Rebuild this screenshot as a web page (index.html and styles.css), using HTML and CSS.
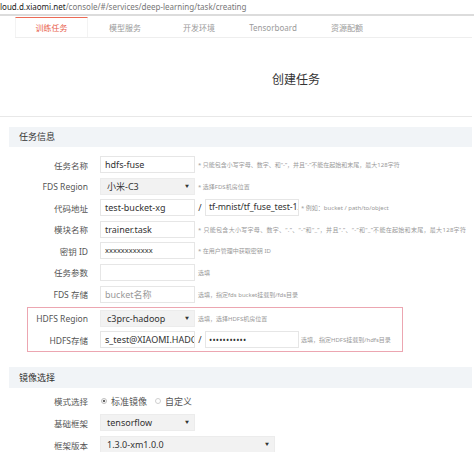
FILE: index.html
```html
<!DOCTYPE html>
<html lang="zh-CN">
<head>
<meta charset="utf-8">
<title>创建任务</title>
<link rel="stylesheet" href="styles.css">
</head>
<body>
<div class="urlbar"><span class="host">loud.d.xiaomi.net</span><span class="path">/console/#/services/deep-learning/task/creating</span></div>
<nav class="tabs">
  <div class="tab active">训练任务</div>
  <div class="tab">模型服务</div>
  <div class="tab">开发环境</div>
  <div class="tab">Tensorboard</div>
  <div class="tab">资源配额</div>
</nav>
<header class="title-area"><h1>创建任务</h1></header>
<main class="content">
  <section class="section">
    <div class="sec-head">任务信息</div>
    <div class="form">
      <div class="row"><div class="label">任务名称</div><div class="ctl">hdfs-fuse</div><span class="hint">* 只能包含小写字母、数字、和“-”，并且“-”不能在起始和末尾，最大128字符</span></div>
      <div class="row"><div class="label">FDS Region</div><div class="ctl select"><span>小米-C3</span><span class="arrow">▼</span></div><span class="hint">* 选择FDS机房位置</span></div>
      <div class="row"><div class="label">代码地址</div><div class="ctl">test-bucket-xg</div><span class="slash">/</span><div class="ctl second big">tf-mnist/tf_fuse_test-1.0.tar.gz</div><span class="hint">* 例如：bucket / path/to/object</span></div>
      <div class="row"><div class="label">模块名称</div><div class="ctl">trainer.task</div><span class="hint wider">* 只能包含大小写字母、数字、“.”、“-”和“_”，并且“.”、“-”和“_”不能在起始和末尾，最大128字符</span></div>
      <div class="row"><div class="label">密钥 ID</div><div class="ctl small">xxxxxxxxxxxx</div><span class="hint">* 在用户管理中获取密钥 ID</span></div>
      <div class="row"><div class="label">任务参数</div><div class="ctl"></div><span class="hint">选填</span></div>
      <div class="row"><div class="label">FDS 存储</div><div class="ctl placeholder">bucket名称</div><span class="hint">选填，指定fds bucket挂载到/fds目录</span></div>
      <div class="hl">
        <div class="row"><div class="label">HDFS Region</div><div class="ctl select"><span>c3prc-hadoop</span><span class="arrow">▼</span></div><span class="hint">选填，选择HDFS机房位置</span></div>
        <div class="row"><div class="label">HDFS存储</div><div class="ctl">s_test@XIAOMI.HADOOP</div><span class="slash">/</span><div class="ctl second pw">•••••••••••</div><span class="hint">选填，指定HDFS挂载到/hdfs目录</span></div>
      </div>
    </div>
  </section>
  <section class="section second-sec">
    <div class="sec-head tall">镜像选择</div>
    <div class="form form2">
      <div class="row"><div class="label">模式选择</div>
        <div class="radios">
          <span class="radio"><span class="dot on"></span>标准镜像</span>
          <span class="radio"><span class="dot"></span>自定义</span>
        </div>
      </div>
      <div class="row"><div class="label">基础框架</div><div class="ctl select"><span>tensorflow</span><span class="arrow">▼</span></div></div>
      <div class="row"><div class="label">框架版本</div><div class="ctl select wide"><span>1.3.0-xm1.0.0</span><span class="arrow">▼</span></div></div>
    </div>
  </section>
</main>
</body>
</html>
```
FILE: styles.css
```css
html, body {
  margin: 0;
  padding: 0;
  background: #fff;
}
body {
  width: 474px;
  height: 452px;
  overflow: hidden;
  font-family: "Noto Sans", "Noto Sans CJK SC", sans-serif;
  color: #333;
}
.urlbar {
  height: 14px;
  line-height: 13px;
  font-size: 8px;
  white-space: nowrap;
  overflow: hidden;
  border-bottom: 2px solid #dcdcdc;
}
.host { color: #222; }
.path { color: #777; }

.tabs {
  display: flex;
  height: 20px;
  margin: 1px 2px 0 15px;
  border-bottom: 1px solid #eeeeee;
}
.tab {
  width: 74px;
  box-sizing: border-box;
  text-align: center;
  font-size: 8px;
  line-height: 19px;
  color: #9a9a9a;
  border-top: 1px solid transparent;
}
.tab.active {
  width: 73px;
  color: #e8604c;
  border-top-color: #ec6a55;
  border-left: 1px solid #f3f3f3;
  border-right: 1px solid #f3f3f3;
}

.title-area {
  height: 78px;
  margin-right: 2px;
  border-bottom: 1px solid #e8e8e8;
}
.title-area h1 {
  margin: 0;
  padding: 34px 0 0 272px;
  font-size: 12px;
  line-height: 16px;
  font-weight: normal;
  color: #333;
}

.content {
  margin: 10px 2px 0 9px;
}
.sec-head {
  height: 20px;
  line-height: 20px;
  padding-left: 10px;
  background: #f1f4f7;
  font-size: 9px;
  color: #333;
}
.sec-head.tall {
  height: 21px;
  line-height: 21px;
}
.second-sec {
  margin-top: 14.5px;
}
.form {
  padding-top: 9px;
}
.form2 {
  padding-top: 5px;
}
.row {
  display: flex;
  align-items: center;
  height: 17px;
  margin-bottom: 4.6px;
}
.label {
  flex: none;
  width: 79px;
  margin-right: 12px;
  text-align: right;
  font-size: 8.5px;
  color: #555;
  white-space: nowrap;
}
.ctl {
  flex: none;
  width: 95px;
  height: 17px;
  box-sizing: border-box;
  border: 1px solid #e6e6e6;
  padding: 0 4px;
  font-size: 9px;
  line-height: 15px;
  color: #333;
  white-space: nowrap;
  overflow: hidden;
  background: #fff;
}
.ctl.select {
  display: flex;
  justify-content: space-between;
  align-items: center;
  background: #f2f2f2;
  border-color: #ececec;
  padding-left: 6px;
}
.ctl.wide { width: 175px; }
.arrow {
  font-size: 4px;
  color: #333;
  margin-right: 1px;
}
.ctl.second {
  width: 94px;
}
.ctl.big {
  font-size: 8.8px;
  letter-spacing: -0.1px;
  padding-left: 3px;
}
.ctl.small {
  font-size: 7.5px;
}
.ctl.pw {
  font-size: 8.5px;
  letter-spacing: 0.2px;
  padding-left: 3px;
}
.ctl.placeholder {
  color: #999;
}
.slash {
  flex: none;
  width: 10px;
  text-align: center;
  font-size: 9px;
  color: #333;
}
.hint {
  margin-left: 3px;
  font-size: 6px;
  color: #999;
  white-space: nowrap;
}
.hint.wider {
  letter-spacing: 0.3px;
}
.ctl.second + .hint {
  margin-left: 2px;
}

.hl {
  width: 376px;
  box-sizing: border-box;
  margin: 2px 0 0 18px;
  padding: 1.6px 0 3px;
  border: 1px solid #eca6b1;
}
.hl .label {
  width: 60px;
}
.hl .row:last-child {
  margin-bottom: 0;
}

.radios {
  display: flex;
  align-items: center;
  font-size: 9px;
  color: #555;
}
.radio {
  display: flex;
  align-items: center;
  margin-right: 7px;
}
.dot {
  width: 4px;
  height: 4px;
  border: 1px solid #cfcfcf;
  border-radius: 50%;
  margin: 0 4px 0 1px;
  box-sizing: content-box;
}
.dot.on {
  background: radial-gradient(circle, #666 0 1.3px, #fff 1.6px);
  border-color: #bdbdbd;
}
```
